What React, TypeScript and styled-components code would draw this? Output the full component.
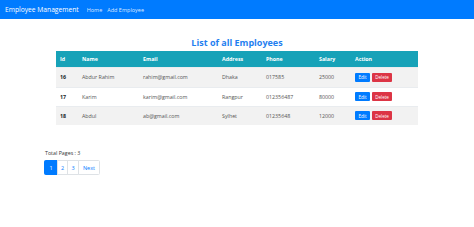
import React from "react";
import styled, { createGlobalStyle } from "styled-components";

const Global = createGlobalStyle`
  html, body { margin: 0; padding: 0; background: #fff; }
  body { font-family: "Open Sans", "Noto Sans", sans-serif; color: #212529; }
  * { box-sizing: border-box; }
`;

const Nav = styled.nav`
  height: 19px;
  background: #007bff;
  display: flex;
  align-items: center;
  padding-left: 5px;
`;

const Brand = styled.span`
  color: #fff;
  font-size: 6.7px;
  margin-right: 8px;
`;

const NavLink = styled.a`
  color: rgba(255, 255, 255, 0.85);
  font-size: 5.5px;
  margin-right: 5px;
  text-decoration: none;
`;

const Main = styled.main`
  padding: 0 0 0 56px;
  width: 418px;
`;

const Title = styled.h3`
  margin: 0;
  padding-top: 18px;
  height: 32px;
  text-align: center;
  color: #1f7ff0;
  font-size: 9px;
  font-weight: 700;
  line-height: 12px;
`;

const Table = styled.table`
  width: 362px;
  border-collapse: collapse;
  table-layout: fixed;
  font-size: 5.3px;
`;

const HeadCell = styled.th<{ w: number }>`
  width: ${(p) => p.w}px;
  background: #17a2b8;
  color: #fff;
  text-align: left;
  font-weight: 700;
  height: 16px;
  padding: 0 0 0 4px;
`;

const Row = styled.tr<{ striped: boolean; h: number }>`
  background: ${(p) => (p.striped ? "#f2f2f2" : "#fff")};
  height: ${(p) => p.h}px;
`;

const Cell = styled.td<{ bold?: boolean }>`
  padding: 0 0 0 4px;
  font-weight: ${(p) => (p.bold ? 700 : 400)};
  color: ${(p) => (p.bold ? "#212529" : "#555")};
  white-space: nowrap;
  border-top: 1px solid #e9ecef;
`;

const Btn = styled.button<{ variant: "primary" | "danger"; w: number }>`
  display: inline-flex;
  align-items: center;
  justify-content: center;
  width: ${(p) => p.w}px;
  height: 9px;
  margin-right: 2px;
  padding: 0;
  border: none;
  border-radius: 1px;
  font-family: inherit;
  font-size: 4.5px;
  color: #fff;
  background: ${(p) => (p.variant === "primary" ? "#007bff" : "#dc3545")};
  vertical-align: middle;
`;

const Footer = styled.div`
  padding: 25px 0 0 45px;
`;

const TotalText = styled.div`
  font-size: 5.3px;
  color: #333;
  height: 7px;
  line-height: 7px;
`;

const Pager = styled.ul`
  display: flex;
  list-style: none;
  margin: 0;
  padding: 0;
  margin-top: 3px;
  margin-left: -1px;
`;

const PageItem = styled.li<{ active?: boolean; w: number }>`
  width: ${(p) => p.w}px;
  height: 15px;
  display: flex;
  align-items: center;
  justify-content: center;
  font-size: 5.5px;
  border: 1px solid ${(p) => (p.active ? "#007bff" : "#dee2e6")};
  margin-left: -1px;
  background: ${(p) => (p.active ? "#007bff" : "#fff")};
  color: ${(p) => (p.active ? "#fff" : "#007bff")};
  &:first-child { border-radius: 1.5px 0 0 1.5px; margin-left: 0; }
  &:last-child { border-radius: 0 1.5px 1.5px 0; }
`;

const cols = [
  { label: "Id", w: 22 },
  { label: "Name", w: 61 },
  { label: "Email", w: 79 },
  { label: "Address", w: 44 },
  { label: "Phone", w: 53 },
  { label: "Salary", w: 36 },
  { label: "Action", w: 67 },
];

const rows = [
  { id: 16, name: "Abdur Rahim", email: "rahim@gmail.com", address: "Dhaka", phone: "017585", salary: "25000", h: 20 },
  { id: 17, name: "Karim", email: "karim@gmail.com", address: "Rangpur", phone: "012356487", salary: "80000", h: 19 },
  { id: 18, name: "Abdul", email: "ab@gmail.com", address: "Sylhet", phone: "01235648", salary: "12000", h: 19 },
];

export default function App() {
  return (
    <>
      <Global />
      <Nav>
        <Brand>Employee Management</Brand>
        <NavLink>Home</NavLink>
        <NavLink>Add Employee</NavLink>
      </Nav>
      <Main>
        <Title>List of all Employees</Title>
        <Table>
          <thead>
            <tr>
              {cols.map((c) => (
                <HeadCell key={c.label} w={c.w}>
                  {c.label}
                </HeadCell>
              ))}
            </tr>
          </thead>
          <tbody>
            {rows.map((r, i) => (
              <Row key={r.id} striped={i % 2 === 0} h={r.h}>
                <Cell bold>{r.id}</Cell>
                <Cell>{r.name}</Cell>
                <Cell>{r.email}</Cell>
                <Cell>{r.address}</Cell>
                <Cell>{r.phone}</Cell>
                <Cell>{r.salary}</Cell>
                <Cell>
                  <Btn variant="primary" w={15}>Edit</Btn>
                  <Btn variant="danger" w={20}>Delete</Btn>
                </Cell>
              </Row>
            ))}
          </tbody>
        </Table>
      </Main>
      <Footer>
        <TotalText>Total Pages : 3</TotalText>
        <Pager>
          <PageItem active w={14}>1</PageItem>
          <PageItem w={11}>2</PageItem>
          <PageItem w={12}>3</PageItem>
          <PageItem w={22}>Next</PageItem>
        </Pager>
      </Footer>
    </>
  );
}
